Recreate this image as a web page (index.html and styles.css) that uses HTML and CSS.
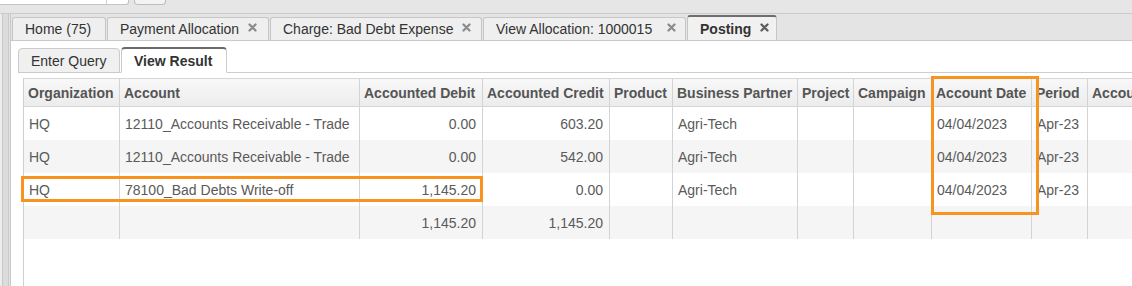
FILE: index.html
```html
<!DOCTYPE html>
<html>
<head>
<meta charset="utf-8">
<link rel="stylesheet" href="styles.css">
</head>
<body>
<div class="app">
  <div class="topbar">
    <div class="search"><span class="search-field"></span></div>
    <div class="top-btn"></div>
  </div>
  <div class="main">
    <div class="rail"></div>
    <div class="content">
      <div class="tabs">
        <div class="tab t-home"><span>Home (75)</span></div>
        <div class="tab t-pay"><span>Payment Allocation</span><svg class="x" viewBox="0 0 9 9"><path d="M1.5 1.5L7.5 7.5M7.5 1.5L1.5 7.5"/></svg></div>
        <div class="tab t-charge"><span>Charge: Bad Debt Expense</span><svg class="x" viewBox="0 0 9 9"><path d="M1.5 1.5L7.5 7.5M7.5 1.5L1.5 7.5"/></svg></div>
        <div class="tab t-view"><span>View Allocation: 1000015</span><svg class="x" viewBox="0 0 9 9"><path d="M1.5 1.5L7.5 7.5M7.5 1.5L1.5 7.5"/></svg></div>
        <div class="tab t-post active"><span>Posting</span><svg class="x" viewBox="0 0 9 9"><path d="M1.5 1.5L7.5 7.5M7.5 1.5L1.5 7.5"/></svg></div>
      </div>
      <div class="panel">
        <div class="subtabs">
          <div class="subtab">Enter Query</div>
          <div class="subtab active">View Result</div>
        </div>
        <div class="grid-wrap">
          <div class="grid">
            <div class="row head">
              <div class="c">Organization</div>
              <div class="c">Account</div>
              <div class="c">Accounted Debit</div>
              <div class="c">Accounted Credit</div>
              <div class="c">Product</div>
              <div class="c">Business Partner</div>
              <div class="c">Project</div>
              <div class="c">Campaign</div>
              <div class="c">Account Date</div>
              <div class="c">Period</div>
              <div class="c">Account Type</div>
            </div>
            <div class="row">
              <div class="c">HQ</div>
              <div class="c">12110_Accounts Receivable - Trade</div>
              <div class="c num">0.00</div>
              <div class="c num">603.20</div>
              <div class="c"></div>
              <div class="c">Agri-Tech</div>
              <div class="c"></div>
              <div class="c"></div>
              <div class="c">04/04/2023</div>
              <div class="c">Apr-23</div>
              <div class="c"></div>
            </div>
            <div class="row alt">
              <div class="c">HQ</div>
              <div class="c">12110_Accounts Receivable - Trade</div>
              <div class="c num">0.00</div>
              <div class="c num">542.00</div>
              <div class="c"></div>
              <div class="c">Agri-Tech</div>
              <div class="c"></div>
              <div class="c"></div>
              <div class="c">04/04/2023</div>
              <div class="c">Apr-23</div>
              <div class="c"></div>
            </div>
            <div class="row">
              <div class="c">HQ</div>
              <div class="c">78100_Bad Debts Write-off</div>
              <div class="c num">1,145.20</div>
              <div class="c num">0.00</div>
              <div class="c"></div>
              <div class="c">Agri-Tech</div>
              <div class="c"></div>
              <div class="c"></div>
              <div class="c">04/04/2023</div>
              <div class="c">Apr-23</div>
              <div class="c"></div>
            </div>
            <div class="row alt">
              <div class="c"></div>
              <div class="c"></div>
              <div class="c num">1,145.20</div>
              <div class="c num">1,145.20</div>
              <div class="c"></div>
              <div class="c"></div>
              <div class="c"></div>
              <div class="c"></div>
              <div class="c"></div>
              <div class="c"></div>
              <div class="c"></div>
            </div>
          </div>
          <div class="hl hl-row"></div>
          <div class="hl hl-col"></div>
        </div>
      </div>
    </div>
  </div>
</div>
</body>
</html>
```

FILE: styles.css
```css
* { box-sizing: border-box; }
html, body { margin: 0; padding: 0; }
body {
  width: 1132px;
  height: 286px;
  overflow: hidden;
  background: #fff;
  font-family: "Liberation Sans", Arial, sans-serif;
  font-size: 14px;
  color: #333;
}
.app { display: flex; flex-direction: column; height: 286px; }

.topbar {
  height: 14px;
  flex: none;
  display: flex;
  align-items: flex-start;
  background: #e6e6e6;
  border-bottom: 1px solid #cbcbcb;
}
.search {
  width: 129px;
  height: 5px;
  background: #fff;
  border-right: 1px solid #c4c4c4;
  border-bottom: 1px solid #c4c4c4;
  border-radius: 0 0 3px 0;
  display: flex;
}
.search-field { width: 107px; height: 4px; border-right: 1px solid #d0d0d0; }
.top-btn {
  margin-left: 5px;
  width: 32px;
  height: 5px;
  background: #f3f3f3;
  border: 1px solid #bdbdbd;
  border-top: none;
  border-radius: 0 0 4px 4px;
}

.main { flex: 1; display: flex; min-height: 0; }
.rail {
  width: 10px;
  flex: none;
  background: linear-gradient(to right, #ededed 0 2px, #c8c8c8 2px 3px, #dcdcdc 3px 8px, #cacaca 8px 9px, #e4e4e4 9px 10px);
}
.content {
  flex: 1;
  min-width: 0;
  display: flex;
  flex-direction: column;
  border-left: 1px solid #c9c9c9;
}

.tabs {
  flex: none;
  height: 27px;
  display: flex;
  align-items: flex-end;
  gap: 1px;
  padding-left: 1px;
  background: #e4e4e4;
  border-bottom: 1px solid #c9c9c9;
}
.tab {
  flex: none;
  height: 24px;
  margin-bottom: -1px;
  display: flex;
  align-items: center;
  padding: 0 9px 0 12px;
  background: #efefef;
  border: 1px solid #c6c6c6;
  border-bottom-color: #c9c9c9;
  border-radius: 3px 3px 0 0;
  color: #333;
  white-space: nowrap;
}
.t-home { width: 94px; }
.t-pay { width: 162px; }
.t-charge { width: 212px; }
.t-view { width: 203px; justify-content: space-between; }
.t-post { width: 90px; }
.tab .x {
  flex: none;
  width: 9px;
  height: 9px;
  margin-left: 9px;
  align-self: flex-start;
  margin-top: 5px;
  fill: none;
  stroke: #8c8c8c;
  stroke-width: 2.3;
  stroke-linecap: round;
}
.tab.active {
  height: 26px;
  border-top: 2px solid #6e6e6e;
  background: #f1f1f1;
  font-weight: bold;
  justify-content: space-between;
}
.tab.active .x { stroke: #5e5e5e; margin-top: 6px; }

.panel {
  flex: 1;
  min-height: 0;
  display: flex;
  flex-direction: column;
  padding: 6px 0 0 7px;
  background: #fff;
}
.subtabs {
  flex: none;
  display: flex;
  gap: 1px;
  align-items: flex-end;
  height: 26px;
  border-bottom: 1px solid #cdcdcd;
}
.subtab {
  height: 25px;
  margin-bottom: -1px;
  padding: 0 12px;
  display: flex;
  align-items: center;
  background: #f0f0f0;
  border: 1px solid #cbcbcb;
  border-radius: 4px 4px 0 0;
  color: #333;
}
.subtab:first-child { width: 102px; }
.subtab.active {
  height: 26px;
  width: 106px;
  background: #fff;
  border-top: 2px solid #6a6a6a;
  border-bottom-color: #fff;
  font-weight: bold;
  padding-left: 12px;
}

.grid-wrap {
  position: relative;
  flex: 1;
  margin: 5px 0 0 5px;
  border-left: 1px solid #cfcfcf;
}
.grid { overflow: hidden; }
.row {
  display: grid;
  grid-template-columns: 96px 240px 123px 127px 63px 125px 56px 78px 100px 56px 160px;
  height: 33px;
  color: #5a5a5a;
}
.row.alt { background: #f5f5f5; }
.row.head {
  height: 29px;
  border-top: 1px solid #d6d6d6;
  border-bottom: 1px solid #d6d6d6;
  background: linear-gradient(#f8f8f8, #ececec);
  font-weight: bold;
  color: #555;
}
.c {
  display: flex;
  align-items: center;
  padding: 0 6px 0 5px;
  border-right: 1px solid #d3d3d3;
  white-space: nowrap;
  overflow: hidden;
}
.head .c { padding-left: 4px; }
.c.num { justify-content: flex-end; }

.hl {
  position: absolute;
  border: 3px solid #f7931e;
  pointer-events: none;
}
.hl-row { left: -3px; top: 98px; width: 462px; height: 26px; }
.hl-col { left: 907px; top: -2px; width: 108px; height: 139px; }
```
